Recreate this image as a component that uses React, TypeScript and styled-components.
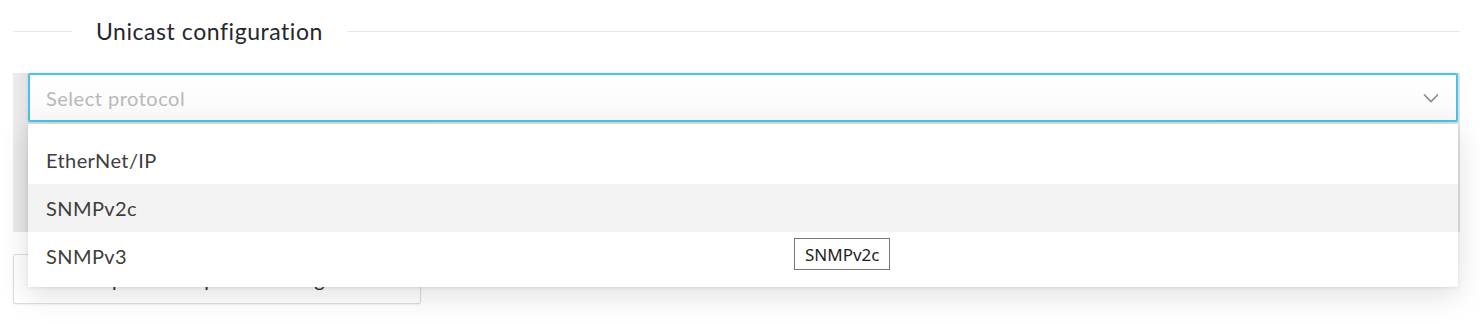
import React from "react";
import styled, { createGlobalStyle } from "styled-components";

const GlobalStyle = createGlobalStyle`
  html, body {
    margin: 0;
    padding: 0;
    background: #ffffff;
    font-family: Lato, "Open Sans", sans-serif;
  }
`;

const Page = styled.div`
  width: 1480px;
  height: 324px;
  overflow: hidden;
  box-sizing: border-box;
  padding: 0 20px 0 13px;
`;

const TitleRow = styled.div`
  display: flex;
  align-items: center;
  height: 62px;
  gap: 24px;
`;

const Line = styled.div<{ $grow?: boolean }>`
  height: 1px;
  background: #e9e9e9;
  width: ${({ $grow }) => ($grow ? "auto" : "59px")};
  flex: ${({ $grow }) => ($grow ? 1 : "none")};
`;

const Title = styled.h2`
  margin: 0;
  font-size: 23px;
  letter-spacing: 0.55px;
  font-weight: 400;
  color: #24272c;
  white-space: nowrap;
`;

const Content = styled.div`
  position: relative;
  padding-top: 11px;
`;

const Panel = styled.div`
  background: linear-gradient(to right, #ececec, #e2e2e2 15px, #e6e6e6);
  height: 159px;
  padding-left: 15px;
  box-sizing: border-box;
`;

const SelectBox = styled.div`
  display: flex;
  align-items: center;
  justify-content: space-between;
  height: 49px;
  margin-right: 2px;
  box-sizing: border-box;
  border: 2px solid #4cc3e3;
  border-radius: 2px;
  background: linear-gradient(#ffffff, #fafafa);
  box-shadow: 0 0 2px rgba(76, 195, 227, 0.6);
  padding: 0 17px 0 16px;
`;

const Placeholder = styled.span`
  font-size: 20px;
  letter-spacing: 0.5px;
  color: #b8b8b8;
`;

const Menu = styled.ul`
  position: absolute;
  top: 62px;
  left: 15px;
  right: 2px;
  margin: 0;
  padding: 12px 0 7px;
  list-style: none;
  background: #ffffff;
  box-shadow: 0 8px 28px rgba(0, 0, 0, 0.13), 0 1px 3px rgba(0, 0, 0, 0.08);
  z-index: 2;
`;

const Item = styled.li<{ $active?: boolean }>`
  height: 48px;
  display: flex;
  align-items: center;
  padding-left: 18px;
  font-size: 20px;
  letter-spacing: 0.4px;
  color: #3d3d3d;
  background: ${({ $active }) => ($active ? "#f3f3f3" : "#ffffff")};
`;

const AddButton = styled.button`
  margin-top: 22px;
  width: 408px;
  height: 50px;
  display: flex;
  align-items: center;
  gap: 14px;
  padding: 0 0 0 30px;
  border: 1px solid #dcdcdc;
  border-radius: 2px;
  background: #ffffff;
  font-family: Lato, sans-serif;
  font-size: 20px;
  letter-spacing: 0.3px;
  color: #2c2c2c;
  box-shadow: 0 1px 2px rgba(0, 0, 0, 0.05);
`;

const Tooltip = styled.div`
  position: absolute;
  left: 781px;
  top: 176px;
  height: 32px;
  padding: 0 10px;
  display: flex;
  align-items: center;
  box-sizing: border-box;
  background: #ffffff;
  border: 1px solid #777777;
  font-family: "Noto Sans", "Open Sans", sans-serif;
  font-size: 17px;
  color: #1e1e1e;
  z-index: 3;
`;

const Chevron = () => (
  <svg width="16" height="10" viewBox="0 0 16 10" fill="none">
    <path d="M1 1.5 L8 8.5 L15 1.5" stroke="#8a8a8a" strokeWidth="1.6" />
  </svg>
);

const options = ["EtherNet/IP", "SNMPv2c", "SNMPv3"];

const App: React.FC = () => {
  return (
    <>
      <GlobalStyle />
      <Page>
        <TitleRow>
          <Line />
          <Title>Unicast configuration</Title>
          <Line $grow />
        </TitleRow>
        <Content>
          <Panel>
            <SelectBox>
              <Placeholder>Select protocol</Placeholder>
              <Chevron />
            </SelectBox>
          </Panel>
          <AddButton>
            <span>+</span>
            Add protocol-specific configuration
          </AddButton>
          <Menu>
            {options.map((opt) => (
              <Item key={opt} $active={opt === "SNMPv2c"}>
                {opt}
              </Item>
            ))}
          </Menu>
          <Tooltip>SNMPv2c</Tooltip>
        </Content>
      </Page>
    </>
  );
};

export default App;
